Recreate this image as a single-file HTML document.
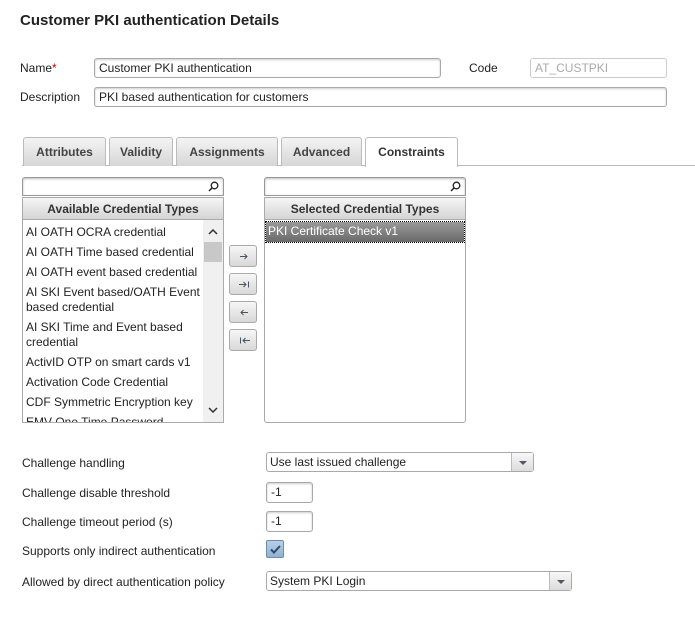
<!DOCTYPE html>
<html><head><style>
*{box-sizing:border-box}
body{margin:0;width:695px;height:623px;background:#fff;font-family:"Liberation Sans",Arial,sans-serif;font-size:12px;color:#222;position:relative;overflow:hidden}
.a{position:absolute}
.inp{position:absolute;border:1px solid #a9a9a9;border-radius:3px;background:#fff;padding:2px 4px;font-size:12px;line-height:14px;box-shadow:inset 0 1px 2px #ccc}
.tab{position:absolute;top:137px;height:29px;border:1px solid #bbb;border-bottom:none;border-radius:3px 3px 0 0;background:linear-gradient(#f4f4f4,#d6d6d6);font-weight:bold;color:#444;text-align:center;line-height:28px;font-size:12px}
.hdr{position:absolute;height:23px;border:1px solid #aaa;background:linear-gradient(#f6f6f6,#d4d4d4);font-weight:bold;text-align:center;line-height:22px;color:#333}
.list{position:absolute;border:1px solid #aaa;border-top:none;background:#fff;overflow:hidden}
.it{position:absolute;left:3px;font-size:12px;line-height:15px;color:#222}
.btn{position:absolute;left:229px;width:28px;height:22px;border:1px solid #aaa;border-radius:3px;background:linear-gradient(#f6f6f6,#d8d8d8)}
.btn svg{position:absolute;left:9px;top:6px}
.lbl{position:absolute;left:22px;font-size:12px}
.sel{position:absolute;border:1px solid #a9a9a9;border-radius:3px;background:#fff;padding:2px 3px;line-height:14px;font-size:12px}
.dd{position:absolute;right:0;top:0;bottom:0;width:22px;border-left:1px solid #bbb;background:linear-gradient(#f8f8f8,#dcdcdc)}
.dd:after{content:"";position:absolute;left:7px;top:8px;border:4px solid transparent;border-top:4px solid #556;border-bottom:none}
.srch{position:absolute;height:19px;border:1px solid #999;border-radius:3px 3px 0 0;background:#fff;box-shadow:inset 0 1px 2px #bbb}
.srch svg{position:absolute;right:4px;top:3px}
</style></head><body>
<div class="a" style="left:20px;top:12px;font-size:15px;font-weight:bold;color:#222">Customer PKI authentication Details</div>
<div class="a" style="left:20px;top:61px">Name<span style="color:#c00">*</span></div>
<div class="inp" style="left:94px;top:58px;width:347px;height:20px">Customer PKI authentication</div>
<div class="a" style="left:469px;top:61px">Code</div>
<div class="inp" style="left:530px;top:58px;width:137px;height:20px;color:#aaa;box-shadow:none;border-color:#ccc">AT_CUSTPKI</div>
<div class="a" style="left:20px;top:90px">Description</div>
<div class="inp" style="left:94px;top:87px;width:573px;height:20px">PKI based authentication for customers</div>

<div class="a" style="left:22px;top:165px;width:673px;height:1px;background:#bbb"></div>
<div class="tab" style="left:23px;width:83px">Attributes</div>
<div class="tab" style="left:109px;width:64px">Validity</div>
<div class="tab" style="left:176px;width:102px">Assignments</div>
<div class="tab" style="left:281px;width:81px">Advanced</div>
<div class="tab" style="left:365px;width:93px;background:#fff;height:30px;color:#333">Constraints</div>

<div class="srch" style="left:22px;top:177px;width:202px"><svg width="11" height="11" viewBox="0 0 11 11"><circle cx="6.5" cy="4.5" r="3.3" fill="none" stroke="#222" stroke-width="1.3"/><line x1="4" y1="7" x2="1" y2="10" stroke="#222" stroke-width="1.5"/></svg></div>
<div class="hdr" style="left:22px;top:197px;width:202px">Available Credential Types</div>
<div class="list" style="left:22px;top:220px;width:202px;height:203px">
<div class="a" style="right:0;top:0;width:20px;height:202px;background:#f0f0f0"></div>
<div class="a" style="right:1px;top:22px;width:18px;height:20px;background:#c8c8c8"></div>
<svg class="a" style="right:5px;top:9px" width="10" height="6"><polyline points="1,5 5,1 9,5" fill="none" stroke="#333" stroke-width="1.5"/></svg>
<svg class="a" style="right:5px;top:187px" width="10" height="6"><polyline points="1,1 5,5 9,1" fill="none" stroke="#333" stroke-width="1.5"/></svg>
<div class="it" style="top:5px">AI OATH OCRA credential</div>
<div class="it" style="top:25px">AI OATH Time based credential</div>
<div class="it" style="top:45px">AI OATH event based credential</div>
<div class="it" style="top:65px">AI SKI Event based/OATH Event<br>based credential</div>
<div class="it" style="top:100px">AI SKI Time and Event based<br>credential</div>
<div class="it" style="top:135px">ActivID OTP on smart cards v1</div>
<div class="it" style="top:155px">Activation Code Credential</div>
<div class="it" style="top:175px">CDF Symmetric Encryption key</div>
<div class="it" style="top:195px">EMV One Time Password</div>
</div>

<div class="btn" style="top:245px"><svg width="10" height="9"><path d="M1 4.5H8M5.5 2L8 4.5L5.5 7" fill="none" stroke="#456" stroke-width="1"/></svg></div>
<div class="btn" style="top:273px"><svg width="11" height="9"><path d="M0 4.5H7M4.5 2L7 4.5L4.5 7M9.5 1.5V7.5" fill="none" stroke="#456" stroke-width="1"/></svg></div>
<div class="btn" style="top:301px"><svg width="10" height="9"><path d="M9 4.5H2M4.5 2L2 4.5L4.5 7" fill="none" stroke="#456" stroke-width="1"/></svg></div>
<div class="btn" style="top:329px"><svg width="11" height="9"><path d="M1.5 1.5V7.5M11 4.5H4M6.5 2L4 4.5L6.5 7" fill="none" stroke="#456" stroke-width="1"/></svg></div>

<div class="srch" style="left:264px;top:177px;width:202px"><svg width="11" height="11" viewBox="0 0 11 11"><circle cx="6.5" cy="4.5" r="3.3" fill="none" stroke="#222" stroke-width="1.3"/><line x1="4" y1="7" x2="1" y2="10" stroke="#222" stroke-width="1.5"/></svg></div>
<div class="hdr" style="left:264px;top:197px;width:202px">Selected Credential Types</div>
<div class="list" style="left:264px;top:220px;width:202px;height:203px;border-radius:0 0 3px 3px">
<div class="a" style="left:1px;top:2px;width:198px;height:20px;background:linear-gradient(#999,#6a6a6a);outline:1px dotted #000;color:#fff;padding-left:2px;line-height:19px">PKI Certificate Check v1</div>
</div>

<div class="lbl" style="top:456px">Challenge handling</div>
<div class="sel" style="left:266px;top:452px;width:268px;height:20px">Use last issued challenge<div class="dd"></div></div>
<div class="lbl" style="top:486px">Challenge disable threshold</div>
<div class="inp" style="left:266px;top:482px;width:47px;height:21px">-1</div>
<div class="lbl" style="top:515px">Challenge timeout period (s)</div>
<div class="inp" style="left:266px;top:511px;width:47px;height:21px">-1</div>
<div class="lbl" style="top:544px">Supports only indirect authentication</div>
<div class="a" style="left:266px;top:540px;width:18px;height:18px;border:1px solid #6a8eb0;border-radius:2px;background:linear-gradient(#b8d0e6,#8fb2d2)"><svg style="position:absolute;left:3px;top:4px" width="11" height="9"><path d="M1 4.5L4 7.5L10 1" fill="none" stroke="#2a4a6a" stroke-width="2"/></svg></div>
<div class="lbl" style="top:575px">Allowed by direct authentication policy</div>
<div class="sel" style="left:266px;top:571px;width:306px;height:20px">System PKI Login<div class="dd"></div></div>
</body></html>
